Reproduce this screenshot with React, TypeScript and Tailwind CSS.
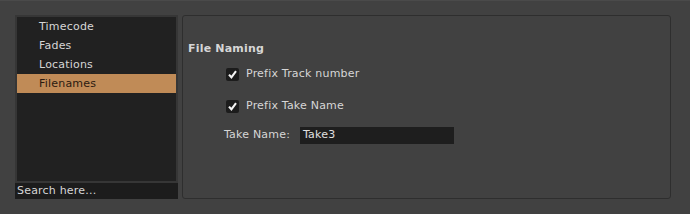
const items = ['Timecode', 'Fades', 'Locations', 'Filenames']

function Check({ label }: { label: string }) {
  return (
    <div className="flex items-center h-[16px] pl-[38px]">
      <span className="w-[13px] h-[13px] rounded-[2px] bg-[#1c1c1c] flex items-center justify-center">
        <svg width="9" height="9" viewBox="0 0 9 9">
          <path d="M1 4.6 L3.4 7.3 L8 1.2" stroke="#f4f4f4" strokeWidth="2.1" fill="none" />
        </svg>
      </span>
      <span className="ml-[7px]">{label}</span>
    </div>
  )
}

export default function App() {
  return (
    <div
      className="w-[690px] h-[214px] bg-[#414141] border-t border-[#4a4a4a] flex pt-[14px] pl-[15px] text-[11px] tracking-[0.2px] text-[#d6d6d6]"
      style={{ fontFamily: '"DejaVu Sans", Verdana, sans-serif' }}
    >
      {/* Left list */}
      <div className="w-[163px] flex flex-col">
        <div className="h-[168px] border-2 border-[#363636] bg-[#212121]">
          {items.map((it) => (
            <div
              key={it}
              className={`h-[19px] flex items-center pl-[22px] pt-[1px] ${
                it === 'Filenames' ? 'bg-[#c08b57] text-[#2b1a10]' : ''
              }`}
            >
              {it}
            </div>
          ))}
        </div>
        <div className="h-[16px] bg-[#1c1c1c] pl-[2px] flex items-center">Search here...</div>
      </div>

      {/* Right panel */}
      <div className="ml-[4px] w-[489px] h-[184px] border border-[#2e2e2e] rounded-[3px] pl-[5px] pt-[25px]">
        <div className="font-bold h-[16px] flex items-center">File Naming</div>
        <div className="mt-[9px]">
          <Check label="Prefix Track number" />
        </div>
        <div className="mt-[16px]">
          <Check label="Prefix Take Name" />
        </div>
        <div className="mt-[13px] flex items-center pl-[36px]">
          <span className="w-[76px]">Take Name:</span>
          <div className="w-[154px] h-[17px] bg-[#1e1e1e] flex items-center pl-[3px] text-[#e0e0e0]">Take3</div>
        </div>
      </div>
    </div>
  )
}
